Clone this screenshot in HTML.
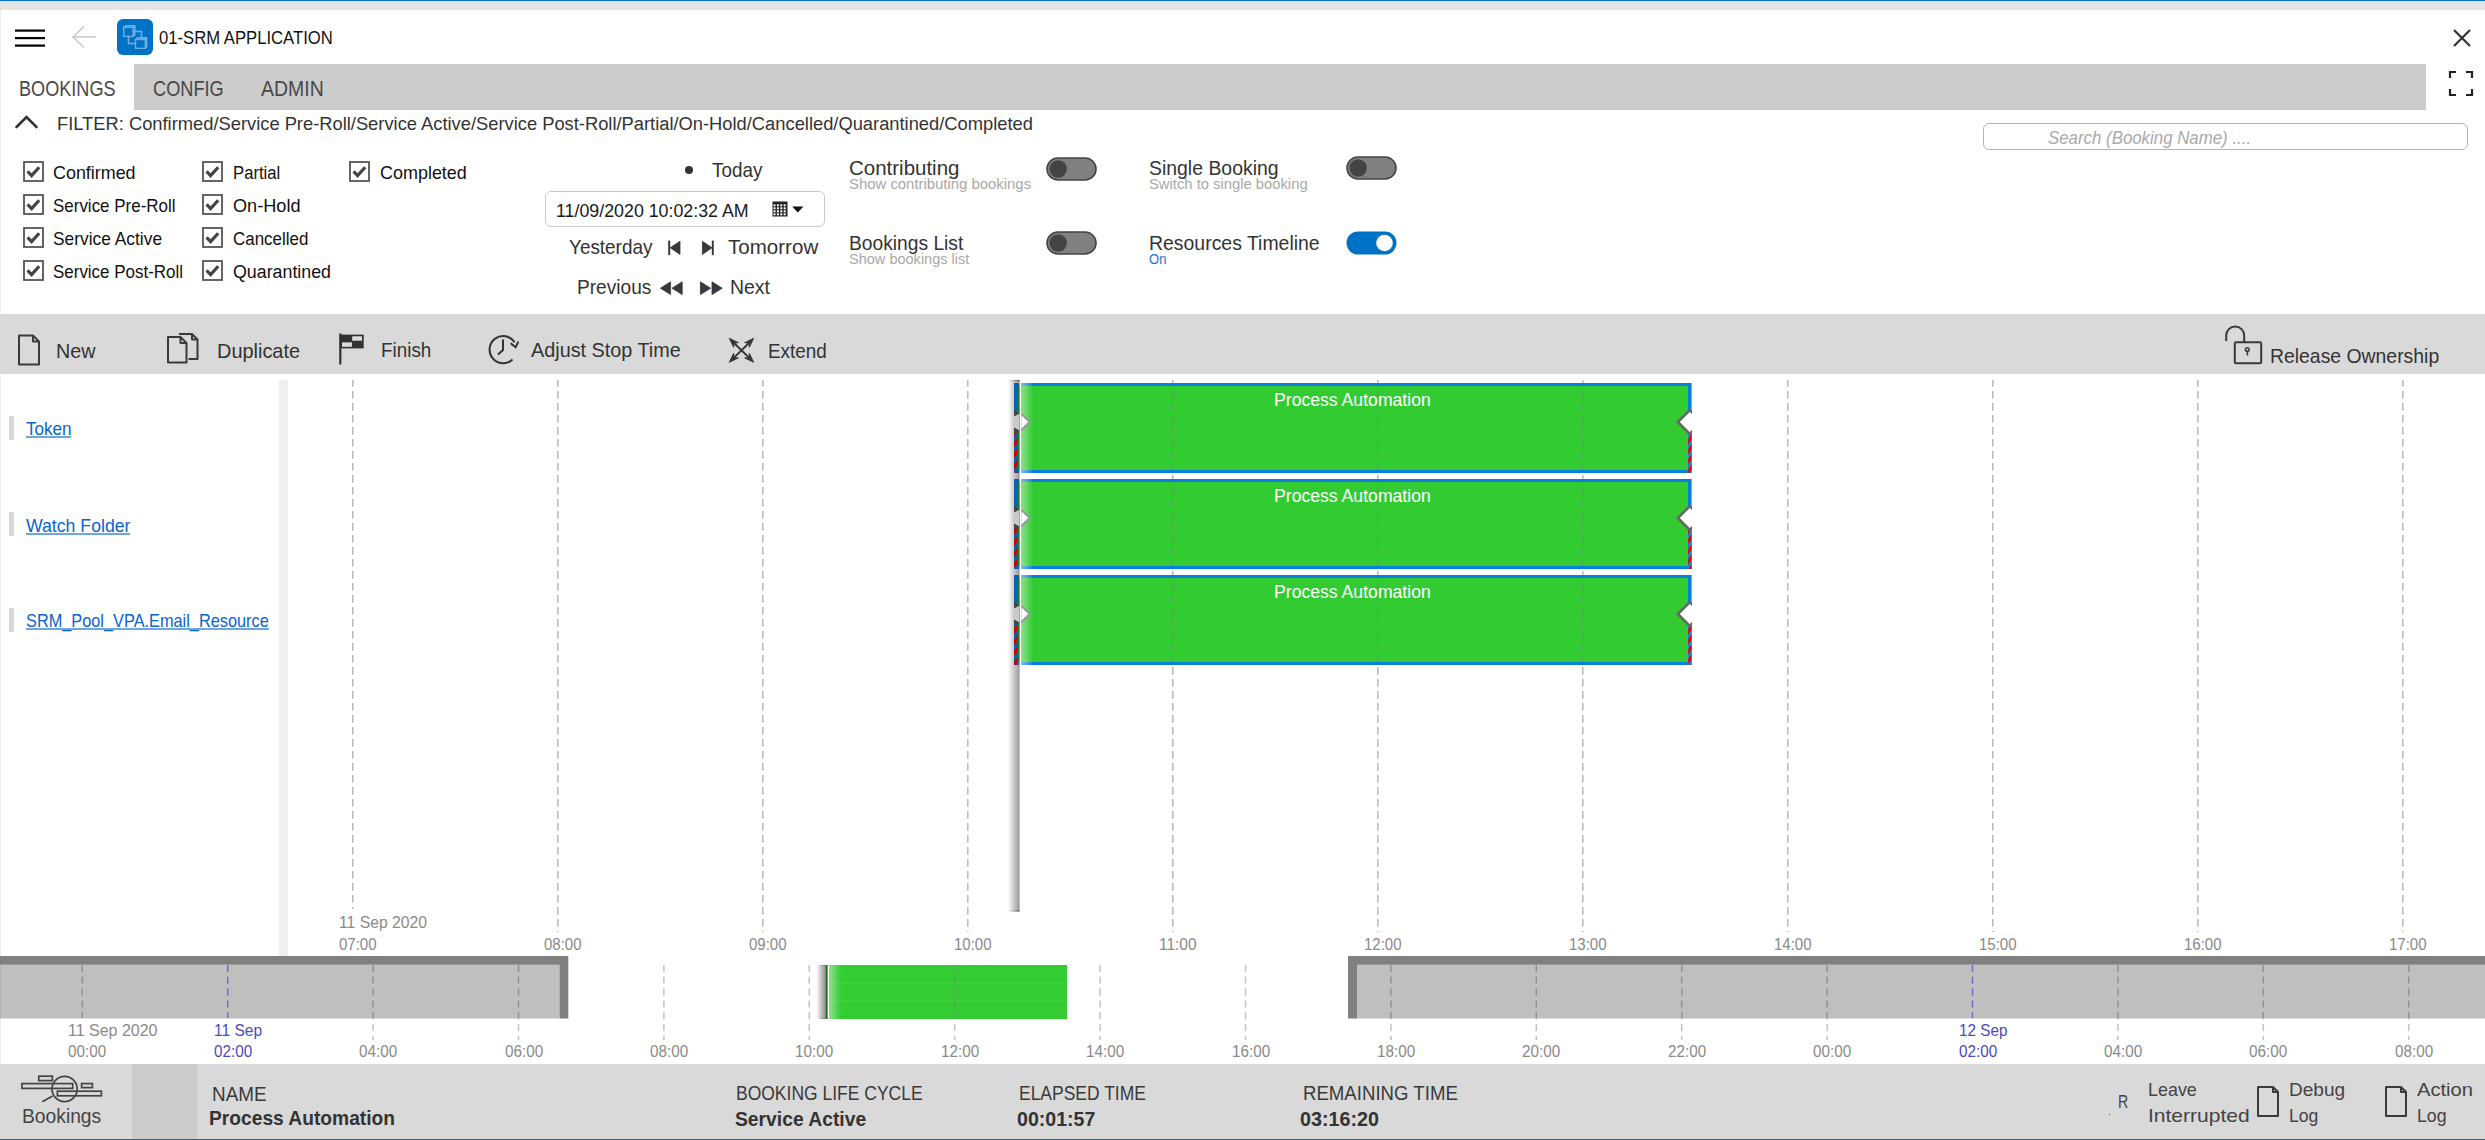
<!DOCTYPE html>
<html><head><meta charset="utf-8"><title>01-SRM APPLICATION</title>
<style>
html,body{margin:0;padding:0;}
body{width:2485px;height:1140px;position:relative;overflow:hidden;background:#fff;font-family:"Liberation Sans",sans-serif;}
.t{position:absolute;white-space:nowrap;line-height:normal;transform-origin:0 0;}
.r{position:absolute;display:block;}
</style></head><body>
<div class="r" style="left:0px;top:0px;width:2485px;height:1px;background:#0070C8;"></div>
<div class="r" style="left:0px;top:1px;width:2485px;height:9px;background:#E4E4E4;"></div>
<div class="r" style="left:0px;top:10px;width:1px;height:1128px;background:#E9EEF3;"></div>
<svg class="r" style="left:14px;top:28px;" width="32" height="20" viewBox="0 0 32 20"><g fill="#000"><rect x="1" y="1.5" width="30" height="2.2"/><rect x="1" y="9" width="30" height="2.2"/><rect x="1" y="16.5" width="30" height="2.2"/></g></svg>
<svg class="r" style="left:70px;top:24px;" width="28" height="26" viewBox="0 0 28 26"><path d="M14 2.5 L3 13 L14 23.5 M3 13 H26" fill="none" stroke="#C8C8C8" stroke-width="1.6"/></svg>
<svg class="r" style="left:117px;top:19px;" width="36" height="36" viewBox="0 0 36 36"><rect x="0" y="0" width="36" height="36" rx="6" fill="#0072C6"/><g fill="none" stroke="#6FAEE3" stroke-width="1.6"><rect x="11.5" y="12.5" width="13" height="12"/><rect x="6.8" y="8.3" width="9.2" height="9"/><path d="M6.8 8.3 L9 6.8 H17.8 V15.8 L16 17.3 M16 8.3 L17.8 6.8"/><rect x="18.6" y="20.6" width="9.6" height="8.6"/><path d="M18.6 20.6 L20.5 18.9 H29.6 V28 L28.2 29.2 M28.2 20.6 L29.6 18.9"/></g><g fill="#0072C6"><rect x="7.6" y="9.1" width="7.6" height="7.4"/><rect x="19.4" y="21.4" width="8" height="7"/></g></svg>
<div class="t" style="left:159.30px;top:27.14px;font-size:19.186px;color:#111;transform:scaleX(0.8692);">01-SRM APPLICATION</div>
<svg class="r" style="left:2450px;top:27px;" width="24" height="22" viewBox="0 0 24 22"><path d="M4 3 L20 19 M20 3 L4 19" stroke="#333" stroke-width="2.2" fill="none"/></svg>
<svg class="r" style="left:2447px;top:69px;" width="28" height="29" viewBox="0 0 28 29"><path d="M3 9 V3 H9 M19 3 H25 V9 M25 20 V26 H19 M9 26 H3 V20" stroke="#222" stroke-width="2.2" fill="none"/></svg>
<div class="r" style="left:134px;top:64px;width:2292px;height:46px;background:#CCCCCC;"></div>
<div class="t" style="left:19.30px;top:75.87px;font-size:21.802px;color:#4a4a4a;transform:scaleX(0.8302);">BOOKINGS</div>
<div class="t" style="left:153.20px;top:75.87px;font-size:21.802px;color:#484848;transform:scaleX(0.8343);">CONFIG</div>
<div class="t" style="left:261.40px;top:75.87px;font-size:21.802px;color:#484848;transform:scaleX(0.8927);">ADMIN</div>
<svg class="r" style="left:13px;top:112px;" width="28" height="20" viewBox="0 0 28 20"><path d="M3.5 15 L13.5 5 L23.5 15" stroke="#333" stroke-width="2.6" fill="none" stroke-linecap="round"/></svg>
<div class="t" style="left:57.30px;top:112.90px;font-size:18.895px;color:#333;transform:scaleX(0.9704);">FILTER: Confirmed/Service Pre-Roll/Service Active/Service Post-Roll/Partial/On-Hold/Cancelled/Quarantined/Completed</div>
<div class="r" style="left:1983px;top:123px;width:485px;height:27px;background:#fff;box-sizing:border-box;border:1.5px solid #B4B4B4;border-radius:6px;"></div>
<div class="t" style="left:2047.80px;top:127.44px;font-size:19.186px;color:#A9A9A9;font-style:italic;transform:scaleX(0.8785);">Search (Booking Name) ....</div>
<svg class="r" style="left:22.5px;top:161px;" width="21" height="21" viewBox="0 0 21 21"><rect x="1" y="1" width="19" height="19" fill="#fff" stroke="#555" stroke-width="1.8"/><path d="M4.6 10.4 L8.6 14.6 L16.2 6.2" stroke="#444" stroke-width="3.2" fill="none"/></svg>
<div class="t" style="left:53.00px;top:162.10px;font-size:18.895px;color:#111;transform:scaleX(0.9481);">Confirmed</div>
<svg class="r" style="left:22.5px;top:194px;" width="21" height="21" viewBox="0 0 21 21"><rect x="1" y="1" width="19" height="19" fill="#fff" stroke="#555" stroke-width="1.8"/><path d="M4.6 10.4 L8.6 14.6 L16.2 6.2" stroke="#444" stroke-width="3.2" fill="none"/></svg>
<div class="t" style="left:53.00px;top:195.10px;font-size:18.895px;color:#111;transform:scaleX(0.8983);">Service Pre-Roll</div>
<svg class="r" style="left:22.5px;top:227px;" width="21" height="21" viewBox="0 0 21 21"><rect x="1" y="1" width="19" height="19" fill="#fff" stroke="#555" stroke-width="1.8"/><path d="M4.6 10.4 L8.6 14.6 L16.2 6.2" stroke="#444" stroke-width="3.2" fill="none"/></svg>
<div class="t" style="left:53.00px;top:228.10px;font-size:18.895px;color:#111;transform:scaleX(0.9198);">Service Active</div>
<svg class="r" style="left:22.5px;top:260px;" width="21" height="21" viewBox="0 0 21 21"><rect x="1" y="1" width="19" height="19" fill="#fff" stroke="#555" stroke-width="1.8"/><path d="M4.6 10.4 L8.6 14.6 L16.2 6.2" stroke="#444" stroke-width="3.2" fill="none"/></svg>
<div class="t" style="left:53.00px;top:261.10px;font-size:18.895px;color:#111;transform:scaleX(0.8981);">Service Post-Roll</div>
<svg class="r" style="left:202px;top:161px;" width="21" height="21" viewBox="0 0 21 21"><rect x="1" y="1" width="19" height="19" fill="#fff" stroke="#555" stroke-width="1.8"/><path d="M4.6 10.4 L8.6 14.6 L16.2 6.2" stroke="#444" stroke-width="3.2" fill="none"/></svg>
<div class="t" style="left:232.50px;top:162.10px;font-size:18.895px;color:#111;transform:scaleX(0.8841);">Partial</div>
<svg class="r" style="left:202px;top:194px;" width="21" height="21" viewBox="0 0 21 21"><rect x="1" y="1" width="19" height="19" fill="#fff" stroke="#555" stroke-width="1.8"/><path d="M4.6 10.4 L8.6 14.6 L16.2 6.2" stroke="#444" stroke-width="3.2" fill="none"/></svg>
<div class="t" style="left:232.50px;top:195.10px;font-size:18.895px;color:#111;transform:scaleX(0.9609);">On-Hold</div>
<svg class="r" style="left:202px;top:227px;" width="21" height="21" viewBox="0 0 21 21"><rect x="1" y="1" width="19" height="19" fill="#fff" stroke="#555" stroke-width="1.8"/><path d="M4.6 10.4 L8.6 14.6 L16.2 6.2" stroke="#444" stroke-width="3.2" fill="none"/></svg>
<div class="t" style="left:232.50px;top:228.10px;font-size:18.895px;color:#111;transform:scaleX(0.8988);">Cancelled</div>
<svg class="r" style="left:202px;top:260px;" width="21" height="21" viewBox="0 0 21 21"><rect x="1" y="1" width="19" height="19" fill="#fff" stroke="#555" stroke-width="1.8"/><path d="M4.6 10.4 L8.6 14.6 L16.2 6.2" stroke="#444" stroke-width="3.2" fill="none"/></svg>
<div class="t" style="left:232.50px;top:261.10px;font-size:18.895px;color:#111;transform:scaleX(0.9434);">Quarantined</div>
<svg class="r" style="left:349px;top:161px;" width="21" height="21" viewBox="0 0 21 21"><rect x="1" y="1" width="19" height="19" fill="#fff" stroke="#555" stroke-width="1.8"/><path d="M4.6 10.4 L8.6 14.6 L16.2 6.2" stroke="#444" stroke-width="3.2" fill="none"/></svg>
<div class="t" style="left:379.50px;top:162.10px;font-size:18.895px;color:#111;transform:scaleX(0.9512);">Completed</div>
<div class="r" style="left:685px;top:165.5px;width:8px;height:8px;border-radius:50%;background:#333"></div>
<div class="t" style="left:712.00px;top:159.05px;font-size:20.058px;color:#333;transform:scaleX(0.9424);">Today</div>
<div class="r" style="left:544.5px;top:190.5px;width:280px;height:36.5px;background:#fff;box-sizing:border-box;border:1.5px solid #C8C8C8;border-radius:6px;"></div>
<div class="t" style="left:556.00px;top:201.06px;font-size:18.169px;color:#1a1a1a;transform:scaleX(0.9805);">11/09/2020 10:02:32 AM</div>
<svg class="r" style="left:772px;top:201px;" width="16" height="16" viewBox="0 0 16 16"><rect x="0.5" y="0.5" width="15" height="15" fill="#222"/><g fill="#fff"><rect x="1.5" y="3.3" width="2" height="2"/><rect x="1.5" y="6.3" width="2" height="2"/><rect x="1.5" y="9.3" width="2" height="2"/><rect x="1.5" y="12.3" width="2" height="2"/><rect x="4.9" y="3.3" width="2" height="2"/><rect x="4.9" y="6.3" width="2" height="2"/><rect x="4.9" y="9.3" width="2" height="2"/><rect x="4.9" y="12.3" width="2" height="2"/><rect x="8.3" y="3.3" width="2" height="2"/><rect x="8.3" y="6.3" width="2" height="2"/><rect x="8.3" y="9.3" width="2" height="2"/><rect x="8.3" y="12.3" width="2" height="2"/><rect x="11.7" y="3.3" width="2" height="2"/><rect x="11.7" y="6.3" width="2" height="2"/><rect x="11.7" y="9.3" width="2" height="2"/><rect x="11.7" y="12.3" width="2" height="2"/></g></svg>
<svg class="r" style="left:791px;top:205px;" width="14" height="9" viewBox="0 0 14 9"><path d="M1.2 1.5 H12.4 L6.8 7.6 Z" fill="#111"/></svg>
<div class="t" style="left:569.20px;top:235.58px;font-size:20.349px;color:#333;transform:scaleX(0.9302);">Yesterday</div>
<svg class="r" style="left:666px;top:239px;" width="16" height="18" viewBox="0 0 16 18"><rect x="2.2" y="1.4" width="2" height="14.8" rx="0.8" fill="#36393C"/><path d="M14 2.2 V15.4 L4.2 8.8 Z" fill="#36393C" stroke="#36393C" stroke-width="0.8" stroke-linejoin="round"/></svg>
<svg class="r" style="left:700px;top:239px;" width="16" height="18" viewBox="0 0 16 18"><rect x="11.8" y="1.4" width="2" height="14.8" rx="0.8" fill="#36393C"/><path d="M2.4 2.2 V15.4 L12 8.8 Z" fill="#36393C" stroke="#36393C" stroke-width="0.8" stroke-linejoin="round"/></svg>
<div class="t" style="left:728.30px;top:236.24px;font-size:19.622px;color:#333;transform:scaleX(1.0481);">Tomorrow</div>
<div class="t" style="left:576.70px;top:277.01px;font-size:19.331px;color:#333;transform:scaleX(0.9884);">Previous</div>
<svg class="r" style="left:659px;top:280px;" width="25" height="16" viewBox="0 0 25 16"><path d="M11.6 1.8 V14.6 L1.4 8.2 Z M23.2 1.8 V14.6 L13 8.2 Z" fill="#36393C" stroke="#36393C" stroke-width="0.8" stroke-linejoin="round"/></svg>
<svg class="r" style="left:699px;top:280px;" width="25" height="16" viewBox="0 0 25 16"><path d="M1.4 1.8 V14.6 L11.6 8.2 Z M13 1.8 V14.6 L23.2 8.2 Z" fill="#36393C" stroke="#36393C" stroke-width="0.8" stroke-linejoin="round"/></svg>
<div class="t" style="left:729.70px;top:277.01px;font-size:19.331px;color:#333;transform:scaleX(1.0056);">Next</div>
<svg class="r" style="left:1045.5px;top:156.5px;" width="51" height="24" viewBox="0 0 51 24"><rect x="1" y="1" width="49" height="22" rx="11" fill="#808080" stroke="#444" stroke-width="1.6"/><circle cx="12.2" cy="12" r="8.7" fill="#444"/></svg>
<svg class="r" style="left:1045.5px;top:231px;" width="51" height="24" viewBox="0 0 51 24"><rect x="1" y="1" width="49" height="22" rx="11" fill="#808080" stroke="#444" stroke-width="1.6"/><circle cx="12.2" cy="12" r="8.7" fill="#444"/></svg>
<svg class="r" style="left:1345.5px;top:156px;" width="51" height="24" viewBox="0 0 51 24"><rect x="1" y="1" width="49" height="22" rx="11" fill="#808080" stroke="#444" stroke-width="1.6"/><circle cx="12.2" cy="12" r="8.7" fill="#444"/></svg>
<svg class="r" style="left:1345.5px;top:231px;" width="51" height="24" viewBox="0 0 51 24"><rect x="0.5" y="0.5" width="50" height="23" rx="11.5" fill="#0072C6"/><circle cx="38.5" cy="12" r="8.3" fill="#fff"/></svg>
<div class="t" style="left:848.80px;top:156.98px;font-size:20.349px;color:#333;transform:scaleX(1.0075);">Contributing</div>
<div class="t" style="left:848.50px;top:176.28px;font-size:14.826px;color:#A8A8A8;transform:scaleX(1.0051);">Show contributing bookings</div>
<div class="t" style="left:848.80px;top:231.88px;font-size:20.349px;color:#333;transform:scaleX(0.9452);">Bookings List</div>
<div class="t" style="left:848.50px;top:251.18px;font-size:14.826px;color:#A8A8A8;transform:scaleX(0.9809);">Show bookings list</div>
<div class="t" style="left:1148.60px;top:156.78px;font-size:20.349px;color:#333;transform:scaleX(0.9553);">Single Booking</div>
<div class="t" style="left:1148.50px;top:176.28px;font-size:14.826px;color:#A8A8A8;transform:scaleX(0.9980);">Switch to single booking</div>
<div class="t" style="left:1148.80px;top:231.58px;font-size:20.349px;color:#333;transform:scaleX(0.9560);">Resources Timeline</div>
<div class="t" style="left:1148.80px;top:251.18px;font-size:14.826px;color:#1874D0;transform:scaleX(0.8805);">On</div>
<div class="r" style="left:0px;top:314px;width:2485px;height:59.5px;background:#D9D9D9;"></div>
<svg class="r" style="left:16px;top:333px;" width="26" height="34" viewBox="0 0 26 34"><path d="M3 2.5 H17 L23 8.5 V31.5 H3 Z M17 2.5 V8.5 H23" fill="none" stroke="#3a3a3a" stroke-width="2" stroke-linejoin="round"/></svg>
<div class="t" style="left:55.80px;top:339.94px;font-size:19.622px;color:#333;transform:scaleX(1.0057);">New</div>
<svg class="r" style="left:165px;top:331px;" width="36" height="35" viewBox="0 0 36 35"><path d="M3 6 H15.5 L21.5 12 V31.5 H3 Z M15.5 6 V12 H21.5" fill="none" stroke="#3a3a3a" stroke-width="2" stroke-linejoin="round"/><path d="M14 3 H27 L32.5 8.5 V28 H23.5 M27 3 V8.5 H32.5" fill="none" stroke="#3a3a3a" stroke-width="2" stroke-linejoin="round"/></svg>
<div class="t" style="left:217.40px;top:339.94px;font-size:19.622px;color:#333;transform:scaleX(1.0162);">Duplicate</div>
<svg class="r" style="left:337px;top:332px;" width="30" height="34" viewBox="0 0 30 34"><rect x="2.2" y="1.5" width="2.2" height="31" fill="#333"/><rect x="3.3" y="2.6" width="23.4" height="13.8" fill="#333"/><rect x="15.2" y="4.3" width="9.8" height="4.4" fill="#ddd"/><rect x="5" y="10.4" width="9.9" height="4.4" fill="#ddd"/></svg>
<div class="t" style="left:380.90px;top:339.24px;font-size:19.622px;color:#333;transform:scaleX(0.9623);">Finish</div>
<svg class="r" style="left:486px;top:332px;" width="38" height="34" viewBox="0 0 38 34"><path d="M26.5 27.5 A13.6 13.6 0 1 1 28.6 10.2" fill="none" stroke="#333" stroke-width="2"/><path d="M24.6 11.2 L29.6 15.2 L32.4 9.6" fill="none" stroke="#333" stroke-width="2"/><path d="M17 7.5 V18 L12 22.5" fill="none" stroke="#333" stroke-width="2"/></svg>
<div class="t" style="left:531.00px;top:339.24px;font-size:19.622px;color:#333;transform:scaleX(1.0103);">Adjust Stop Time</div>
<svg class="r" style="left:726px;top:335px;" width="31" height="31" viewBox="0 0 31 31"><path d="M7 7 L24 23.6 M24 7 L7 23.6" stroke="#333" stroke-width="1.9"/><path d="M3.30 3.30 L7.68 12.35 L7.97 7.97 L12.35 7.68 Z M27.70 3.30 L18.65 7.68 L23.03 7.97 L23.32 12.35 Z M3.30 27.30 L12.35 22.92 L7.97 22.63 L7.68 18.25 Z M27.70 27.30 L23.32 18.25 L23.03 22.63 L18.65 22.92 Z" fill="#333" stroke="#333" stroke-width="0.9" stroke-linejoin="round"/></svg>
<div class="t" style="left:767.80px;top:339.52px;font-size:20.203px;color:#333;transform:scaleX(0.9365);">Extend</div>
<svg class="r" style="left:2222px;top:324px;" width="42" height="42" viewBox="0 0 42 42"><path d="M4.2 17 V11.5 A9 9 0 0 1 22.2 11.5 V18" fill="none" stroke="#3a3a3a" stroke-width="2"/><rect x="12.8" y="18.3" width="26.4" height="21" rx="1.2" fill="none" stroke="#3a3a3a" stroke-width="2"/><circle cx="25.3" cy="25.6" r="1.9" fill="none" stroke="#3a3a3a" stroke-width="1.5"/><rect x="24.6" y="26.5" width="1.6" height="5" fill="#3a3a3a"/></svg>
<div class="t" style="left:2270.20px;top:344.58px;font-size:20.349px;color:#333;transform:scaleX(0.9536);">Release Ownership</div>
<div class="r" style="left:279px;top:380px;width:9px;height:575.5px;background:#EFEFEF;"></div>
<div class="r" style="left:9px;top:416px;width:4.5px;height:24px;background:#D8D8D8;"></div>
<div class="t" style="left:25.80px;top:418.16px;font-size:18.605px;color:#0A64CC;transform:scaleX(0.9186);">Token</div>
<div class="r" style="left:25.8px;top:436.3px;width:45.7px;height:1.6px;background:#6FA6E0;"></div>
<div class="r" style="left:9px;top:512px;width:4.5px;height:24px;background:#D8D8D8;"></div>
<div class="t" style="left:25.80px;top:514.86px;font-size:18.605px;color:#0A64CC;transform:scaleX(0.9509);">Watch Folder</div>
<div class="r" style="left:25.8px;top:533.0px;width:104.6px;height:1.6px;background:#6FA6E0;"></div>
<div class="r" style="left:9px;top:608px;width:4.5px;height:24px;background:#D8D8D8;"></div>
<div class="t" style="left:25.80px;top:609.96px;font-size:18.605px;color:#0A64CC;transform:scaleX(0.8776);">SRM_Pool_VPA.Email_Resource</div>
<div class="r" style="left:25.8px;top:628.0999999999999px;width:243.2px;height:1.6px;background:#6FA6E0;"></div>
<svg class="r" style="left:0px;top:0px;pointer-events:none;" width="2485" height="1140" viewBox="0 0 2485 1140"><defs><linearGradient id="gl" x1="0" x2="1" y1="0" y2="0"><stop offset="0" stop-color="#8FE08F"/><stop offset="1" stop-color="#33CC33"/></linearGradient><linearGradient id="gb" x1="0" x2="1" y1="0" y2="0"><stop offset="0" stop-color="#7FBDF0"/><stop offset="1" stop-color="#0078DC"/></linearGradient><linearGradient id="nl" x1="0" x2="1" y1="0" y2="0"><stop offset="0" stop-color="#fff"/><stop offset="1" stop-color="#979797"/></linearGradient><pattern id="st" width="8" height="11" patternUnits="userSpaceOnUse" patternTransform="skewY(-50)"><rect width="8" height="11" fill="#0A5FB2"/><rect width="8" height="5.5" fill="#CC0000"/></pattern><pattern id="st2" width="8" height="10" patternUnits="userSpaceOnUse" patternTransform="skewY(-55)"><rect width="8" height="10" fill="#1A86DC"/><rect width="8" height="5.6" fill="#F00000"/></pattern><linearGradient id="nle" x1="0" x2="1" y1="0" y2="0"><stop offset="0" stop-color="#fff"/><stop offset="1" stop-color="#555"/></linearGradient><linearGradient id="gl2" x1="0" x2="1" y1="0" y2="0"><stop offset="0" stop-color="#8FE08F"/><stop offset="1" stop-color="#33CC33"/></linearGradient><linearGradient id="nl2" x1="0" x2="1" y1="0" y2="0"><stop offset="0" stop-color="#fff"/><stop offset="1" stop-color="#8a8a8a"/></linearGradient></defs><rect x="1008" y="380" width="11.6" height="531.5" fill="url(#nl)"/><rect x="1008" y="380" width="11.6" height="1.3" fill="url(#nle)"/><rect x="1008" y="910.2" width="11.6" height="1.3" fill="url(#nle)"/><g stroke="#B8B8B8" stroke-width="1.5" stroke-dasharray="7.7 4.3" stroke-dashoffset="1"><line x1="352.8" y1="380" x2="352.8" y2="909"/><line x1="557.8" y1="380" x2="557.8" y2="932"/><line x1="762.8" y1="380" x2="762.8" y2="932"/><line x1="967.8" y1="380" x2="967.8" y2="932"/><line x1="1172.8" y1="380" x2="1172.8" y2="932"/><line x1="1377.8" y1="380" x2="1377.8" y2="932"/><line x1="1582.8" y1="380" x2="1582.8" y2="932"/><line x1="1787.8" y1="380" x2="1787.8" y2="932"/><line x1="1992.8" y1="380" x2="1992.8" y2="932"/><line x1="2197.8" y1="380" x2="2197.8" y2="932"/><line x1="2402.8" y1="380" x2="2402.8" y2="932"/></g><rect x="1014" y="383" width="677.6" height="90" fill="#067FE0"/><rect x="1014" y="383" width="5.4" height="90" fill="#0A5FB2"/><rect x="1021" y="386" width="667" height="84" fill="#33CC33"/><rect x="1021" y="386" width="12" height="84" fill="url(#gl)"/><rect x="1021" y="383" width="14" height="3" fill="url(#gb)"/><rect x="1021" y="470" width="14" height="3" fill="url(#gb)"/><rect x="1019.4" y="383" width="1.6" height="90" fill="#fff"/><rect x="1017.3" y="386" width="2.1" height="84" fill="#1A7F1A"/><rect x="1014" y="430" width="3.3" height="43" fill="url(#st)"/><rect x="1688.2" y="433" width="3.4" height="40" fill="url(#st2)"/><path d="M1689.8 410.1 L1677.9 422.0 L1689.8 433.9 L1701.7 422.0 Z" fill="#fff" stroke="#666" stroke-width="2.6" stroke-linejoin="miter"/><rect x="1692" y="407" width="14" height="30" fill="#fff"/><path d="M1021.5 414.0 L1029.5 422.0 L1021.5 430.0" fill="#fff" stroke="#9A9A9A" stroke-width="2"/><rect x="1014" y="413.5" width="5.4" height="17" fill="#C8C8C8"/><path d="M1014 410.5 L1019.5 413.5 L1014 416.5 Z M1014 427.5 L1019.5 430.5 L1014 433.5 Z" fill="#444"/><rect x="1014" y="479" width="677.6" height="90" fill="#067FE0"/><rect x="1014" y="479" width="5.4" height="90" fill="#0A5FB2"/><rect x="1021" y="482" width="667" height="84" fill="#33CC33"/><rect x="1021" y="482" width="12" height="84" fill="url(#gl)"/><rect x="1021" y="479" width="14" height="3" fill="url(#gb)"/><rect x="1021" y="566" width="14" height="3" fill="url(#gb)"/><rect x="1019.4" y="479" width="1.6" height="90" fill="#fff"/><rect x="1017.3" y="482" width="2.1" height="84" fill="#1A7F1A"/><rect x="1014" y="526" width="3.3" height="43" fill="url(#st)"/><rect x="1688.2" y="529" width="3.4" height="40" fill="url(#st2)"/><path d="M1689.8 506.1 L1677.9 518.0 L1689.8 529.9 L1701.7 518.0 Z" fill="#fff" stroke="#666" stroke-width="2.6" stroke-linejoin="miter"/><rect x="1692" y="503" width="14" height="30" fill="#fff"/><path d="M1021.5 510.0 L1029.5 518.0 L1021.5 526.0" fill="#fff" stroke="#9A9A9A" stroke-width="2"/><rect x="1014" y="509.5" width="5.4" height="17" fill="#C8C8C8"/><path d="M1014 506.5 L1019.5 509.5 L1014 512.5 Z M1014 523.5 L1019.5 526.5 L1014 529.5 Z" fill="#444"/><rect x="1014" y="575" width="677.6" height="90" fill="#067FE0"/><rect x="1014" y="575" width="5.4" height="90" fill="#0A5FB2"/><rect x="1021" y="578" width="667" height="84" fill="#33CC33"/><rect x="1021" y="578" width="12" height="84" fill="url(#gl)"/><rect x="1021" y="575" width="14" height="3" fill="url(#gb)"/><rect x="1021" y="662" width="14" height="3" fill="url(#gb)"/><rect x="1019.4" y="575" width="1.6" height="90" fill="#fff"/><rect x="1017.3" y="578" width="2.1" height="84" fill="#1A7F1A"/><rect x="1014" y="622" width="3.3" height="43" fill="url(#st)"/><rect x="1688.2" y="625" width="3.4" height="40" fill="url(#st2)"/><path d="M1689.8 602.1 L1677.9 614.0 L1689.8 625.9 L1701.7 614.0 Z" fill="#fff" stroke="#666" stroke-width="2.6" stroke-linejoin="miter"/><rect x="1692" y="599" width="14" height="30" fill="#fff"/><path d="M1021.5 606.0 L1029.5 614.0 L1021.5 622.0" fill="#fff" stroke="#9A9A9A" stroke-width="2"/><rect x="1014" y="605.5" width="5.4" height="17" fill="#C8C8C8"/><path d="M1014 602.5 L1019.5 605.5 L1014 608.5 Z M1014 619.5 L1019.5 622.5 L1014 625.5 Z" fill="#444"/><clipPath id="bc"><rect x="1021" y="386" width="667" height="84"/><rect x="1021" y="482" width="667" height="84"/><rect x="1021" y="578" width="667" height="84"/></clipPath><g clip-path="url(#bc)" stroke="#777" stroke-width="1.5" stroke-dasharray="7.7 4.3" stroke-dashoffset="1" opacity="0.38"><line x1="352.8" y1="380" x2="352.8" y2="909"/><line x1="557.8" y1="380" x2="557.8" y2="932"/><line x1="762.8" y1="380" x2="762.8" y2="932"/><line x1="967.8" y1="380" x2="967.8" y2="932"/><line x1="1172.8" y1="380" x2="1172.8" y2="932"/><line x1="1377.8" y1="380" x2="1377.8" y2="932"/><line x1="1582.8" y1="380" x2="1582.8" y2="932"/><line x1="1787.8" y1="380" x2="1787.8" y2="932"/><line x1="1992.8" y1="380" x2="1992.8" y2="932"/><line x1="2197.8" y1="380" x2="2197.8" y2="932"/><line x1="2402.8" y1="380" x2="2402.8" y2="932"/></g><g stroke-width="1.5" stroke-dasharray="7 4.8"><line x1="82.3" y1="965" x2="82.3" y2="1018" stroke="#C2C2C2"/><line x1="373.1" y1="965" x2="373.1" y2="1040" stroke="#C2C2C2"/><line x1="518.5" y1="965" x2="518.5" y2="1040" stroke="#C2C2C2"/><line x1="663.9" y1="965" x2="663.9" y2="1040" stroke="#C2C2C2"/><line x1="809.3" y1="965" x2="809.3" y2="1040" stroke="#C2C2C2"/><line x1="954.7" y1="965" x2="954.7" y2="1040" stroke="#C2C2C2"/><line x1="1100.1" y1="965" x2="1100.1" y2="1040" stroke="#C2C2C2"/><line x1="1245.5" y1="965" x2="1245.5" y2="1040" stroke="#C2C2C2"/><line x1="1390.9" y1="965" x2="1390.9" y2="1040" stroke="#C2C2C2"/><line x1="1536.3" y1="965" x2="1536.3" y2="1040" stroke="#C2C2C2"/><line x1="1681.7" y1="965" x2="1681.7" y2="1040" stroke="#C2C2C2"/><line x1="1827.1" y1="965" x2="1827.1" y2="1040" stroke="#C2C2C2"/><line x1="2117.9" y1="965" x2="2117.9" y2="1040" stroke="#C2C2C2"/><line x1="2263.3" y1="965" x2="2263.3" y2="1040" stroke="#C2C2C2"/><line x1="2408.7" y1="965" x2="2408.7" y2="1040" stroke="#C2C2C2"/></g><rect x="829" y="965" width="238" height="54" fill="#33CC33"/><rect x="829" y="965" width="12" height="54" fill="url(#gl2)"/><rect x="829" y="982.5" width="238" height="1" fill="#fff" opacity="0.1"/><rect x="829" y="1000.5" width="238" height="1" fill="#fff" opacity="0.1"/><rect x="816.3" y="965" width="9.7" height="54" fill="url(#nl2)"/><rect x="825.8" y="965" width="1.8" height="54" fill="#1A6A1A"/><rect x="816.3" y="965" width="11.3" height="1.2" fill="url(#nle)"/><rect x="816.3" y="1017.8" width="11.3" height="1.2" fill="url(#nle)"/><clipPath id="oc"><rect x="829" y="965" width="238" height="54"/></clipPath><g clip-path="url(#oc)" stroke="#777" stroke-width="1.5" stroke-dasharray="7 4.8" opacity="0.4"><line x1="82.3" y1="965" x2="82.3" y2="1018" /><line x1="373.1" y1="965" x2="373.1" y2="1040" /><line x1="518.5" y1="965" x2="518.5" y2="1040" /><line x1="663.9" y1="965" x2="663.9" y2="1040" /><line x1="809.3" y1="965" x2="809.3" y2="1040" /><line x1="954.7" y1="965" x2="954.7" y2="1040" /><line x1="1100.1" y1="965" x2="1100.1" y2="1040" /><line x1="1245.5" y1="965" x2="1245.5" y2="1040" /><line x1="1390.9" y1="965" x2="1390.9" y2="1040" /><line x1="1536.3" y1="965" x2="1536.3" y2="1040" /><line x1="1681.7" y1="965" x2="1681.7" y2="1040" /><line x1="1827.1" y1="965" x2="1827.1" y2="1040" /><line x1="2117.9" y1="965" x2="2117.9" y2="1040" /><line x1="2263.3" y1="965" x2="2263.3" y2="1040" /><line x1="2408.7" y1="965" x2="2408.7" y2="1040" /></g><g fill="#000" fill-opacity="0.25"><rect x="0" y="964.8" width="559.5" height="53.7"/><rect x="1357" y="964.8" width="1128" height="53.7"/></g><g fill="#808080"><path d="M0 956 H568.3 V1018.5 H559.5 V964.8 H0 Z"/><path d="M1348 956 H2485 V964.8 H1357 V1018.5 H1348 Z"/></g><g stroke-width="1.5" stroke-dasharray="7 4.8"><line x1="227.7" y1="965" x2="227.7" y2="1018" stroke="#6A6AD0"/><line x1="1972.5" y1="965" x2="1972.5" y2="1018" stroke="#6A6AD0"/></g></svg>
<div class="t" style="left:1274.10px;top:388.53px;font-size:18.750px;color:#fff;transform:scaleX(0.9403);">Process Automation</div>
<div class="t" style="left:1274.10px;top:484.53px;font-size:18.750px;color:#fff;transform:scaleX(0.9403);">Process Automation</div>
<div class="t" style="left:1274.10px;top:580.53px;font-size:18.750px;color:#fff;transform:scaleX(0.9403);">Process Automation</div>
<div class="t" style="left:339.00px;top:912.08px;font-size:17.151px;color:#8A8A8A;transform:scaleX(0.9179);">11 Sep 2020</div>
<div class="t" style="left:339.20px;top:934.54px;font-size:16.860px;color:#8A8A8A;transform:scaleX(0.8899);">07:00</div>
<div class="t" style="left:544.20px;top:934.54px;font-size:16.860px;color:#8A8A8A;transform:scaleX(0.8899);">08:00</div>
<div class="t" style="left:749.20px;top:934.54px;font-size:16.860px;color:#8A8A8A;transform:scaleX(0.8899);">09:00</div>
<div class="t" style="left:954.20px;top:934.54px;font-size:16.860px;color:#8A8A8A;transform:scaleX(0.8899);">10:00</div>
<div class="t" style="left:1159.20px;top:934.54px;font-size:16.860px;color:#8A8A8A;transform:scaleX(0.9171);">11:00</div>
<div class="t" style="left:1364.20px;top:934.54px;font-size:16.860px;color:#8A8A8A;transform:scaleX(0.8899);">12:00</div>
<div class="t" style="left:1569.20px;top:934.54px;font-size:16.860px;color:#8A8A8A;transform:scaleX(0.8899);">13:00</div>
<div class="t" style="left:1774.20px;top:934.54px;font-size:16.860px;color:#8A8A8A;transform:scaleX(0.8899);">14:00</div>
<div class="t" style="left:1979.20px;top:934.54px;font-size:16.860px;color:#8A8A8A;transform:scaleX(0.8899);">15:00</div>
<div class="t" style="left:2184.20px;top:934.54px;font-size:16.860px;color:#8A8A8A;transform:scaleX(0.8899);">16:00</div>
<div class="t" style="left:2389.20px;top:934.54px;font-size:16.860px;color:#8A8A8A;transform:scaleX(0.8899);">17:00</div>
<div class="t" style="left:67.60px;top:1020.28px;font-size:17.151px;color:#8A8A8A;transform:scaleX(0.9325);">11 Sep 2020</div>
<div class="t" style="left:68.30px;top:1042.24px;font-size:16.860px;color:#8A8A8A;transform:scaleX(0.9041);">00:00</div>
<div class="t" style="left:213.70px;top:1042.24px;font-size:16.860px;color:#4A4AC0;transform:scaleX(0.9041);">02:00</div>
<div class="t" style="left:359.10px;top:1042.24px;font-size:16.860px;color:#8A8A8A;transform:scaleX(0.9041);">04:00</div>
<div class="t" style="left:504.50px;top:1042.24px;font-size:16.860px;color:#8A8A8A;transform:scaleX(0.9041);">06:00</div>
<div class="t" style="left:649.90px;top:1042.24px;font-size:16.860px;color:#8A8A8A;transform:scaleX(0.9041);">08:00</div>
<div class="t" style="left:795.30px;top:1042.24px;font-size:16.860px;color:#8A8A8A;transform:scaleX(0.9041);">10:00</div>
<div class="t" style="left:940.70px;top:1042.24px;font-size:16.860px;color:#8A8A8A;transform:scaleX(0.9041);">12:00</div>
<div class="t" style="left:1086.10px;top:1042.24px;font-size:16.860px;color:#8A8A8A;transform:scaleX(0.9041);">14:00</div>
<div class="t" style="left:1231.50px;top:1042.24px;font-size:16.860px;color:#8A8A8A;transform:scaleX(0.9041);">16:00</div>
<div class="t" style="left:1376.90px;top:1042.24px;font-size:16.860px;color:#8A8A8A;transform:scaleX(0.9041);">18:00</div>
<div class="t" style="left:1522.30px;top:1042.24px;font-size:16.860px;color:#8A8A8A;transform:scaleX(0.9041);">20:00</div>
<div class="t" style="left:1667.70px;top:1042.24px;font-size:16.860px;color:#8A8A8A;transform:scaleX(0.9041);">22:00</div>
<div class="t" style="left:1813.10px;top:1042.24px;font-size:16.860px;color:#8A8A8A;transform:scaleX(0.9041);">00:00</div>
<div class="t" style="left:1958.50px;top:1042.24px;font-size:16.860px;color:#4A4AC0;transform:scaleX(0.9041);">02:00</div>
<div class="t" style="left:2103.90px;top:1042.24px;font-size:16.860px;color:#8A8A8A;transform:scaleX(0.9041);">04:00</div>
<div class="t" style="left:2249.30px;top:1042.24px;font-size:16.860px;color:#8A8A8A;transform:scaleX(0.9041);">06:00</div>
<div class="t" style="left:2394.70px;top:1042.24px;font-size:16.860px;color:#8A8A8A;transform:scaleX(0.9041);">08:00</div>
<div class="t" style="left:214.00px;top:1020.48px;font-size:17.151px;color:#4A4AC0;transform:scaleX(0.9057);">11 Sep</div>
<div class="t" style="left:1959.20px;top:1020.48px;font-size:17.151px;color:#4A4AC0;transform:scaleX(0.8903);">12 Sep</div>
<div class="r" style="left:0px;top:1064px;width:2485px;height:74.5px;background:#D9D9D9;"></div>
<div class="r" style="left:132px;top:1064px;width:65px;height:74.5px;background:#CBCBCB;"></div>
<div class="r" style="left:0px;top:1138.5px;width:2485px;height:1.5px;background:#0070C8;"></div>
<svg class="r" style="left:18px;top:1072px;" width="88" height="34" viewBox="0 0 88 34"><g fill="none" stroke="#444" stroke-width="1.7"><rect x="3.9" y="11.6" width="50.8" height="4.8"/><rect x="20.8" y="4.2" width="13.6" height="4.4"/><rect x="63.6" y="11.6" width="10.8" height="4"/><rect x="39.4" y="19.2" width="44" height="4.6"/><circle cx="46.6" cy="17" r="12.6"/><path d="M24.3 29.8 L34.6 24"/></g></svg>
<div class="t" style="left:22.00px;top:1104.62px;font-size:20.203px;color:#444;transform:scaleX(0.9538);">Bookings</div>
<div class="t" style="left:212.10px;top:1081.66px;font-size:20.930px;color:#3a3a3a;transform:scaleX(0.9043);">NAME</div>
<div class="t" style="left:209.20px;top:1105.89px;font-size:20.785px;color:#333;font-weight:bold;transform:scaleX(0.9249);">Process Automation</div>
<div class="t" style="left:736.00px;top:1080.86px;font-size:20.930px;color:#3a3a3a;transform:scaleX(0.8359);">BOOKING LIFE CYCLE</div>
<div class="t" style="left:734.80px;top:1107.39px;font-size:20.785px;color:#333;font-weight:bold;transform:scaleX(0.9283);">Service Active</div>
<div class="t" style="left:1018.70px;top:1080.86px;font-size:20.930px;color:#3a3a3a;transform:scaleX(0.8350);">ELAPSED TIME</div>
<div class="t" style="left:1017.10px;top:1107.39px;font-size:20.785px;color:#333;font-weight:bold;transform:scaleX(0.9420);">00:01:57</div>
<div class="t" style="left:1302.70px;top:1080.86px;font-size:20.930px;color:#3a3a3a;transform:scaleX(0.8898);">REMAINING TIME</div>
<div class="t" style="left:1300.40px;top:1107.39px;font-size:20.785px;color:#333;font-weight:bold;transform:scaleX(0.9492);">03:16:20</div>
<div class="r" style="left:2108.5px;top:1113.8px;width:1.6px;height:1.6px;background:#444;"></div>
<div class="t" style="left:2117.80px;top:1090.87px;font-size:19.041px;color:#444;transform:scaleX(0.7418);">R</div>
<div class="t" style="left:2148.40px;top:1078.66px;font-size:18.605px;color:#444;transform:scaleX(0.9635);">Leave</div>
<div class="t" style="left:2148.40px;top:1105.06px;font-size:18.605px;color:#444;transform:scaleX(1.1307);">Interrupted</div>
<svg class="r" style="left:2255px;top:1084px;" width="26" height="35" viewBox="0 0 26 35"><path d="M3 3 H18 L23 8 V32 H3 Z M18 3 V8 H23" fill="none" stroke="#3a3a3a" stroke-width="2" stroke-linejoin="round"/></svg>
<div class="t" style="left:2289.40px;top:1078.66px;font-size:18.605px;color:#444;transform:scaleX(1.0241);">Debug</div>
<div class="t" style="left:2289.40px;top:1105.06px;font-size:18.605px;color:#444;transform:scaleX(0.9446);">Log</div>
<svg class="r" style="left:2383px;top:1084px;" width="26" height="35" viewBox="0 0 26 35"><path d="M3 3 H18 L23 8 V32 H3 Z M18 3 V8 H23" fill="none" stroke="#3a3a3a" stroke-width="2" stroke-linejoin="round"/></svg>
<div class="t" style="left:2417.00px;top:1078.66px;font-size:18.605px;color:#444;transform:scaleX(1.0841);">Action</div>
<div class="t" style="left:2417.00px;top:1105.06px;font-size:18.605px;color:#444;transform:scaleX(0.9542);">Log</div>
</body></html>
